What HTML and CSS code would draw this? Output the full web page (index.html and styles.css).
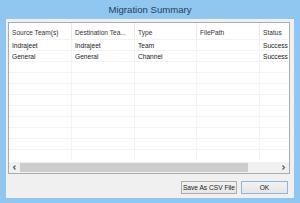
FILE: index.html
```html
<!DOCTYPE html>
<html>
<head>
<meta charset="utf-8">
<link rel="stylesheet" href="styles.css">
</head>
<body>
<div class="window">
  <div class="titlebar">Migration Summary</div>
  <div class="client">
    <div class="listview">
      <div class="viewport">
        <div class="grid">
          <div class="hd">Source Team(s)</div><div class="hd">Destination Tea...</div><div class="hd">Type</div><div class="hd">FilePath</div><div class="hd">Status</div>
          <div class="c">Indrajeet</div><div class="c">Indrajeet</div><div class="c">Team</div><div class="c"></div><div class="c">Success</div>
          <div class="c">General</div><div class="c">General</div><div class="c">Channel</div><div class="c"></div><div class="c">Success</div>
          <div class="c"></div><div class="c"></div><div class="c"></div><div class="c"></div><div class="c"></div>
          <div class="c"></div><div class="c"></div><div class="c"></div><div class="c"></div><div class="c"></div>
          <div class="c"></div><div class="c"></div><div class="c"></div><div class="c"></div><div class="c"></div>
          <div class="c"></div><div class="c"></div><div class="c"></div><div class="c"></div><div class="c"></div>
          <div class="c"></div><div class="c"></div><div class="c"></div><div class="c"></div><div class="c"></div>
          <div class="c"></div><div class="c"></div><div class="c"></div><div class="c"></div><div class="c"></div>
          <div class="c"></div><div class="c"></div><div class="c"></div><div class="c"></div><div class="c"></div>
          <div class="c"></div><div class="c"></div><div class="c"></div><div class="c"></div><div class="c"></div>
          <div class="c"></div><div class="c"></div><div class="c"></div><div class="c"></div><div class="c"></div>
        </div>
      </div>
      <div class="hscroll">
        <div class="arrow"><svg width="5" height="5" viewBox="0 0 5 5"><path d="M3.5 0.5 L1.5 2.5 L3.5 4.5" fill="none" stroke="#606060" stroke-width="1.2"/></svg></div>
        <div class="thumb"></div>
        <div class="track"></div>
        <div class="arrow"><svg width="5" height="5" viewBox="0 0 5 5"><path d="M1.5 0.5 L3.5 2.5 L1.5 4.5" fill="none" stroke="#606060" stroke-width="1.2"/></svg></div>
      </div>
    </div>
    <div class="buttons">
      <div class="btn csv">Save As CSV File</div>
      <div class="btn ok">OK</div>
    </div>
  </div>
</div>
</body>
</html>
```
FILE: styles.css
```css
html, body {
  margin: 0;
  padding: 0;
}
body {
  width: 300px;
  height: 203px;
  overflow: hidden;
  background: #90c7f1;
  font-family: "Liberation Sans", Arial, sans-serif;
}
.window {
  display: flex;
  flex-direction: column;
  width: 300px;
  height: 203px;
}
.titlebar {
  height: 19px;
  line-height: 20px;
  text-align: center;
  font-size: 9.6px;
  color: #24405c;
}
.client {
  margin: 0 6px;
  height: 179px;
  background: #f0f0f0;
  display: flex;
  flex-direction: column;
  padding: 3px 4px 0 2px;
  box-sizing: border-box;
}
.listview {
  height: 152px;
  border: 1px solid #a9acb2;
  background: #fff;
  display: flex;
  flex-direction: column;
  box-sizing: border-box;
}
.viewport {
  flex: 1;
  overflow: hidden;
}
.grid {
  display: grid;
  grid-template-columns: 63px 63px 62px 63px 63px;
  grid-template-rows: 16px;
  grid-auto-rows: 11px;
  width: 314px;
  font-size: 6.6px;
  color: #1a1a1a;
}
.hd {
  border-right: 1px solid #e8e8e8;
  box-sizing: border-box;
  padding: 6px 0 0 3px;
  white-space: nowrap;
  overflow: hidden;
  color: #333;
}
.c {
  border-right: 1px solid #f3f3f3;
  border-top: 1px solid #f3f3f3;
  box-sizing: border-box;
  padding: 2px 0 0 3px;
  white-space: nowrap;
  overflow: hidden;
}
.hscroll {
  height: 11px;
  display: flex;
  background: #f0f0f0;
  flex: none;
}
.arrow {
  width: 11px;
  display: flex;
  align-items: center;
  justify-content: center;
}
.thumb {
  width: 228px;
  background: #cdcdcd;
  margin: 1px 0;
}
.track {
  flex: 1;
}
.buttons {
  display: flex;
  justify-content: flex-end;
  gap: 4px;
  margin-top: 7px;
  padding-right: 2px;
}
.btn {
  height: 13px;
  box-sizing: border-box;
  border: 1px solid #adadad;
  background: linear-gradient(#f2f2f2, #e6e6e6);
  font-size: 6.6px;
  color: #222;
  display: flex;
  align-items: center;
  justify-content: center;
}
.csv {
  width: 56px;
}
.ok {
  width: 47px;
  border-color: #8fb6da;
}
```
